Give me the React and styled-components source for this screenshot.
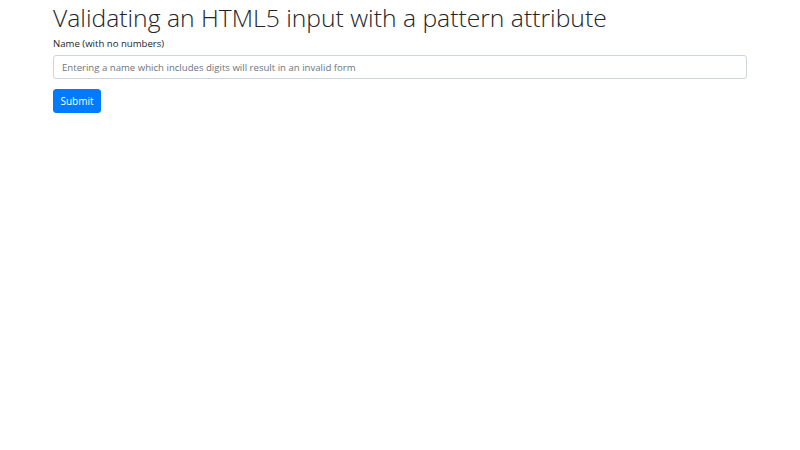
import React from 'react';
import styled, { createGlobalStyle } from 'styled-components';

const GlobalStyle = createGlobalStyle`
  html, body {
    margin: 0;
    padding: 0;
    background: #ffffff;
  }
  body {
    font-family: "Open Sans", "Noto Sans", sans-serif;
    color: #212529;
  }
`;

const Container = styled.div`
  width: 694px;
  margin: 0 auto;
`;

const Title = styled.h1`
  margin: 0 0 2px 0;
  padding-top: 1px;
  font-weight: 300;
  font-size: 24.7px;
  line-height: 34px;
`;

const Form = styled.form`
  display: flex;
  flex-direction: column;
  align-items: flex-start;
`;

const Label = styled.label`
  font-size: 9.6px;
  line-height: 14px;
  margin-bottom: 4px;
`;

const Input = styled.input`
  box-sizing: border-box;
  width: 100%;
  height: 24px;
  padding: 0 8px;
  font-family: inherit;
  font-size: 9.6px;
  border: 1px solid #ced4da;
  border-radius: 3px;
  color: #495057;
  margin-bottom: 10px;

  &::placeholder {
    color: #6c757d;
  }
`;

const Button = styled.button`
  box-sizing: border-box;
  height: 24px;
  width: 48px;
  padding: 0;
  font-family: inherit;
  font-size: 10px;
  color: #ffffff;
  background: #007bff;
  border: 1px solid #007bff;
  border-radius: 3px;
`;

export default function App() {
  return (
    <>
      <GlobalStyle />
      <Container>
        <Title>Validating an HTML5 input with a pattern attribute</Title>
        <Form onSubmit={(e) => e.preventDefault()}>
          <Label htmlFor="name">Name (with no numbers)</Label>
          <Input
            id="name"
            pattern="[^0-9]*"
            placeholder="Entering a name which includes digits will result in an invalid form"
          />
          <Button type="submit">Submit</Button>
        </Form>
      </Container>
    </>
  );
}
